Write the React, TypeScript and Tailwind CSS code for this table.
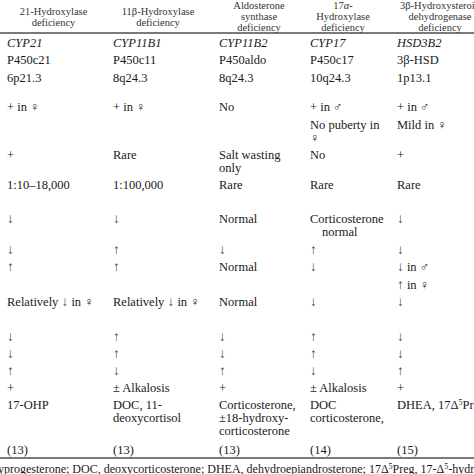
const serif = { fontFamily: '"Liberation Serif", "Times New Roman", serif' };

type Row = { mt: string; cells: React.ReactNode[] };

const Up = () => <span className="text-[13.5px] leading-[10px] text-[#444]">↑</span>;
const Down = () => <span className="text-[13.5px] leading-[10px] text-[#444]">↓</span>;
const up = <Up />;
const down = <Down />;

const rows: Row[] = [
  { mt: "mt-[2.5px]", cells: [<i>CYP21</i>, <i>CYP11B1</i>, <i>CYP11B2</i>, <i>CYP17</i>, <i>HSD3B2</i>] },
  { mt: "mt-[4px]", cells: ["P450c21", "P450c11", "P450aldo", "P450c17", "3β-HSD"] },
  { mt: "mt-[5px]", cells: ["6p21.3", "8q24.3", "8q24.3", "10q24.3", "1p13.1"] },
  { mt: "mt-[16px]", cells: ["+ in ♀", "+ in ♀", "No", "+ in ♂", "+ in ♂"] },
  {
    mt: "mt-[5px]",
    cells: ["", "", "", <>No puberty in<br />♀</>, "Mild in ♀"],
  },
  {
    mt: "mt-[4px]",
    cells: ["+", "Rare", <>Salt wasting<br />only</>, "No", "+"],
  },
  { mt: "mt-[4px]", cells: ["1:10–18,000", "1:100,000", "Rare", "Rare", "Rare"] },
  {
    mt: "mt-[21px]",
    cells: [
      down,
      down,
      "Normal",
      <div className="pl-3 -indent-3">Corticosterone<br />normal</div>,
      down,
    ],
  },
  { mt: "mt-[5px]", cells: [down, up, down, up, down] },
  { mt: "mt-[4px]", cells: [up, up, "Normal", down, <>{down} in ♂</>] },
  { mt: "mt-[5px]", cells: ["", "", "", "", <>{up} in ♀</>] },
  {
    mt: "mt-[4px]",
    cells: [<>Relatively {down} in ♀</>, <>Relatively {down} in ♀</>, "Normal", down, down],
  },
  { mt: "mt-[22px]", cells: [down, up, down, up, down] },
  { mt: "mt-[4px]", cells: [down, up, down, up, down] },
  { mt: "mt-[4px]", cells: [up, down, up, down, up] },
  { mt: "mt-[4px]", cells: ["+", "± Alkalosis", "+", "± Alkalosis", "+"] },
  {
    mt: "mt-[4px]",
    cells: [
      "17-OHP",
      <>DOC, 11-<br />deoxycortisol</>,
      <>Corticosterone,<br />±18-hydroxy-<br />corticosterone</>,
      <>DOC<br />corticosterone,</>,
      <span className="whitespace-nowrap">
        DHEA, 17Δ<sup className="text-[8px] leading-[0]">5</sup>Preg
      </span>,
    ],
  },
  { mt: "mt-[6px]", cells: ["(13)", "(13)", "(13)", "(14)", "(15)"] },
];

const headers: { w: string; lines: React.ReactNode[] }[] = [
  { w: "w-[93px]", lines: ["21-Hydroxylase", "deficiency"] },
  { w: "w-[90px]", lines: ["11β-Hydroxylase", "deficiency"] },
  { w: "w-[80px]", lines: ["Aldosterone", "synthase", "deficiency"] },
  { w: "w-[66px]", lines: [<>17<i>α</i>-</>, "Hydroxylase", "deficiency"] },
  { w: "w-[86px]", lines: ["3β-Hydroxysteroid", "dehydrogenase", "deficiency"] },
];

export default function App() {
  return (
    <div className="w-[474px] h-[474px] overflow-hidden bg-white text-[#1a1a1a]" style={serif}>
      <div className="w-[560px]">
        <div className="grid grid-cols-[106px_106px_91px_87px_130px] pl-[7px] h-[32px] text-[10.5px] leading-[11px] text-[#333]">
          {headers.map((h, i) => (
            <div key={i} className="flex items-center">
              <div className={`${h.w} text-center whitespace-nowrap`}>
                {h.lines.map((l, j) => (
                  <div key={j}>{l}</div>
                ))}
              </div>
            </div>
          ))}
        </div>
        <div className="h-[2px] bg-[#7a7a7a]" />

        {rows.map((r, i) => (
          <div
            key={i}
            className={`grid grid-cols-[106px_106px_91px_87px_130px] pl-[7px] text-[12.5px] leading-[13px] h-auto ${r.mt}`}
          >
            {r.cells.map((c, j) => (
              <div key={j} className="whitespace-nowrap">
                {c}
              </div>
            ))}
          </div>
        ))}

        <div className="h-[2px] bg-[#7a7a7a] mt-[0.5px]" />
        <div className="mt-[3.5px] text-[12px] leading-[13px] whitespace-nowrap ml-[-36px]">
          hydroxyprogesterone; DOC, deoxycorticosterone; DHEA, dehydroepiandrosterone; 17Δ
          <sup className="text-[8px] leading-[0]">5</sup>Preg, 17-Δ<sup className="text-[8px] leading-[0]">5</sup>
          -hydroxypregnenolone.
        </div>
      </div>
    </div>
  );
}
